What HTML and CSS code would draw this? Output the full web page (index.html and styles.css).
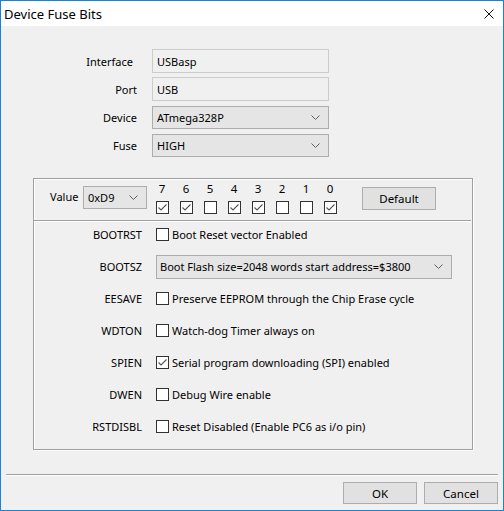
FILE: index.html
```html
<!DOCTYPE html>
<html>
<head>
<meta charset="utf-8">
<link rel="stylesheet" href="styles.css">
</head>
<body>
<div class="window">
  <div class="titlebar">
    <span class="title">Device Fuse Bits</span>
    <svg class="close" width="10" height="10" viewBox="0 0 10 10"><path d="M0.5 0.5 L9.5 9.5 M9.5 0.5 L0.5 9.5" stroke="#111" stroke-width="1" fill="none"/></svg>
  </div>
  <div class="content">
    <div class="form">
      <span class="flabel lbl-interface">Interface</span><div class="textbox">USBasp</div>
      <span class="flabel">Port</span><div class="textbox">USB</div>
      <span class="flabel">Device</span><div class="combo"><span>ATmega328P</span><svg class="chev" width="9" height="5" viewBox="0 0 9 5"><path d="M0.5 0.5 L4.5 4.5 L8.5 0.5" stroke="#606060" fill="none"/></svg></div>
      <span class="flabel">Fuse</span><div class="combo"><span>HIGH</span><svg class="chev" width="9" height="5" viewBox="0 0 9 5"><path d="M0.5 0.5 L4.5 4.5 L8.5 0.5" stroke="#606060" fill="none"/></svg></div>
    </div>

    <div class="group">
      <div class="valuerow">
        <span class="vlabel">Value</span>
        <div class="combo combo-value"><span>0xD9</span><svg class="chev" width="9" height="5" viewBox="0 0 9 5"><path d="M0.5 0.5 L4.5 4.5 L8.5 0.5" stroke="#606060" fill="none"/></svg></div>
        <div class="bits">
          <div class="bit"><span class="digit">7</span><span class="cb"><svg width="11" height="11" viewBox="0 0 11 11"><path d="M1.5 5.5 L4 8 L9.5 2.5" stroke="#555" stroke-width="1.1" fill="none"/></svg></span></div>
          <div class="bit"><span class="digit">6</span><span class="cb"><svg width="11" height="11" viewBox="0 0 11 11"><path d="M1.5 5.5 L4 8 L9.5 2.5" stroke="#555" stroke-width="1.1" fill="none"/></svg></span></div>
          <div class="bit"><span class="digit">5</span><span class="cb"></span></div>
          <div class="bit"><span class="digit">4</span><span class="cb"><svg width="11" height="11" viewBox="0 0 11 11"><path d="M1.5 5.5 L4 8 L9.5 2.5" stroke="#555" stroke-width="1.1" fill="none"/></svg></span></div>
          <div class="bit"><span class="digit">3</span><span class="cb"><svg width="11" height="11" viewBox="0 0 11 11"><path d="M1.5 5.5 L4 8 L9.5 2.5" stroke="#555" stroke-width="1.1" fill="none"/></svg></span></div>
          <div class="bit"><span class="digit">2</span><span class="cb"></span></div>
          <div class="bit"><span class="digit">1</span><span class="cb"></span></div>
          <div class="bit"><span class="digit">0</span><span class="cb"><svg width="11" height="11" viewBox="0 0 11 11"><path d="M1.5 5.5 L4 8 L9.5 2.5" stroke="#555" stroke-width="1.1" fill="none"/></svg></span></div>
        </div>
        <button class="btn btn-default">Default</button>
      </div>
      <div class="divider"></div>
      <div class="fuses">
        <span class="rlabel">BOOTRST</span>
        <div class="check"><span class="cb"></span><span>Boot Reset vector Enabled</span></div>

        <span class="rlabel">BOOTSZ</span>
        <div class="combo combo-wide"><span>Boot Flash size=2048 words start address=$3800</span><svg class="chev" width="9" height="5" viewBox="0 0 9 5"><path d="M0.5 0.5 L4.5 4.5 L8.5 0.5" stroke="#606060" fill="none"/></svg></div>

        <span class="rlabel">EESAVE</span>
        <div class="check"><span class="cb"></span><span>Preserve EEPROM through the Chip Erase cycle</span></div>

        <span class="rlabel">WDTON</span>
        <div class="check"><span class="cb"></span><span>Watch-dog Timer always on</span></div>

        <span class="rlabel">SPIEN</span>
        <div class="check"><span class="cb"><svg width="11" height="11" viewBox="0 0 11 11"><path d="M1.5 5.5 L4 8 L9.5 2.5" stroke="#555" stroke-width="1.1" fill="none"/></svg></span><span>Serial program downloading (SPI) enabled</span></div>

        <span class="rlabel">DWEN</span>
        <div class="check"><span class="cb"></span><span>Debug Wire enable</span></div>

        <span class="rlabel">RSTDISBL</span>
        <div class="check"><span class="cb"></span><span>Reset Disabled (Enable PC6 as i/o pin)</span></div>
      </div>
    </div>

    <div class="sep"></div>
    <div class="buttons">
      <button class="btn">OK</button>
      <button class="btn">Cancel</button>
    </div>
  </div>
</div>
</body>
</html>
```

FILE: styles.css
```css
* { box-sizing: border-box; }

body {
  margin: 0;
  font-family: "Noto Sans", "Liberation Sans", sans-serif;
  font-size: 11px;
  color: #000;
}

.window {
  width: 504px;
  height: 511px;
  border: 1px solid #1883d7;
  display: flex;
  flex-direction: column;
  background: #f0f0f0;
}

.titlebar {
  flex: none;
  height: 25px;
  background: #fff;
  display: flex;
  align-items: center;
  justify-content: space-between;
  padding: 0 9px 0 3px;
}

.title { font-size: 13px; }

.close { display: block; }

.content {
  flex: 1;
  display: flex;
  flex-direction: column;
}

.form {
  display: grid;
  grid-template-columns: 136px 177px;
  grid-auto-rows: 24px;
  column-gap: 15px;
  row-gap: 4px;
  margin-top: 23px;
  align-items: center;
}

.flabel { text-align: right; }
.lbl-interface { padding-right: 4px; }

.textbox {
  height: 24px;
  border: 1px solid #cccccc;
  background: #f0f0f0;
  padding-left: 4px;
  display: flex;
  align-items: center;
}

.combo {
  height: 23px;
  border: 1px solid #adadad;
  background: #e5e5e5;
  display: flex;
  align-items: center;
  justify-content: space-between;
  padding: 0 8px 0 4px;
}

.chev { display: block; flex: none; }

.group {
  margin: 21px 0 0 32px;
  width: 440px;
  height: 272px;
  border: 1px solid #a0a0a0;
  box-shadow: 1px 1px 0 #fff, inset 1px 1px 0 #fff;
}

.valuerow {
  height: 41px;
  display: flex;
  align-items: flex-start;
  padding-left: 16px;
}

.vlabel {
  width: 33px;
  margin-top: 10px;
  line-height: 16px;
}

.combo-value {
  width: 64px;
  margin-top: 7px;
}

.bits {
  display: flex;
  margin-left: 3px;
}

.bit {
  width: 24px;
  display: flex;
  flex-direction: column;
  align-items: center;
  margin-top: 3px;
}

.digit { line-height: 14px; font-size: 11.5px; }

.bit .cb { margin-top: 5px; }

.cb {
  flex: none;
  width: 13px;
  height: 13px;
  border: 1px solid #333;
  background: #fff;
  display: block;
}

.cb svg { display: block; }

.btn {
  width: 74px;
  height: 22px;
  border: 1px solid #adadad;
  background: #e1e1e1;
  font: inherit;
  font-size: 11.5px;
  color: #000;
  padding: 0;
}

.btn-default {
  height: 23px;
  margin-left: 20px;
  margin-top: 8px;
}

.divider {
  height: 2px;
  border-top: 1px solid #a0a0a0;
  border-bottom: 1px solid #fff;
  margin-right: 1px;
}

.fuses {
  display: grid;
  grid-template-columns: 108px 1fr;
  grid-auto-rows: 23px;
  column-gap: 14px;
  row-gap: 9px;
  padding-top: 1px;
  align-items: center;
}

.rlabel { text-align: right; }

.check {
  display: flex;
  align-items: center;
  gap: 3px;
}

.combo-wide {
  width: 296px;
  height: 24px;
  padding-left: 3px;
}

.sep {
  margin: 24px 5px 0;
  border-top: 1px solid #a0a0a0;
  border-bottom: 1px solid #fff;
}

.buttons {
  display: flex;
  justify-content: flex-end;
  gap: 7px;
  padding-right: 5px;
  margin-top: 6px;
}
```
